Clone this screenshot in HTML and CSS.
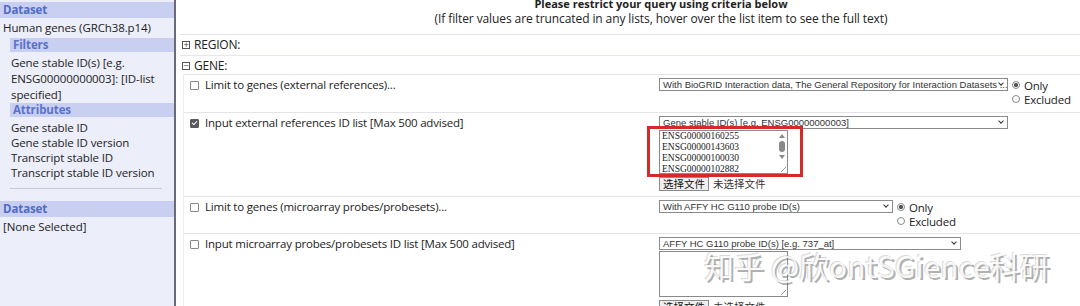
FILE: index.html
```html
<!DOCTYPE html>
<html lang="en">
<head>
  <meta charset="UTF-8" />
  <title>BioMart filters</title>
  <link rel="stylesheet" href="styles.css">
</head>
<body>
  <div class="page">
    <aside class="sidebar">
      <div class="side-head">Dataset</div>
      <div class="side-item">Human genes (GRCh38.p14)</div>
      <div class="side-sub">Filters</div>
      <div class="side-item indent">Gene stable ID(s) [e.g. ENSG00000000003]: [ID-list specified]</div>
      <div class="side-sub tight">Attributes</div>
      <div class="side-list">
        <div>Gene stable ID</div>
        <div>Gene stable ID version</div>
        <div>Transcript stable ID</div>
        <div>Transcript stable ID version</div>
      </div>
      <hr class="side-rule">
      <div class="side-head">Dataset</div>
      <div class="side-item">[None Selected]</div>
    </aside>

    <main class="content">
      <div class="intro">
        <h3>Please restrict your query using criteria below</h3>
        <p>(If filter values are truncated in any lists, hover over the list item to see the full text)</p>
      </div>

      <div class="section">
        <div class="section-title"><span class="toggle">+</span>REGION:</div>
      </div>

      <div class="section">
        <div class="section-title short"><span class="toggle">&minus;</span>GENE:</div>
        <div class="filters">

          <div class="row">
            <div class="label"><span class="cb"></span>Limit to genes (external references)...</div>
            <div class="control inline">
              <div class="select wide">With BioGRID Interaction data, The General Repository for Interaction Datasets ...</div>
              <div class="radios">
                <div class="radio on">Only</div>
                <div class="radio">Excluded</div>
              </div>
            </div>
          </div>

          <div class="row">
            <div class="label"><span class="cb checked"></span>Input external references ID list [Max 500 advised]</div>
            <div class="control">
              <div class="select wide">Gene stable ID(s) [e.g. ENSG00000000003]</div>
              <div class="ids marked">
                <div class="textarea">
                  <div class="lines">ENSG00000160255<br>ENSG00000143603<br>ENSG00000100030<br>ENSG00000102882</div>
                  <div class="scroll"><span class="up"></span><span class="thumb"></span><span class="down"></span></div>
                </div>
              </div>
              <div class="file"><span class="file-btn">选择文件</span>未选择文件</div>
            </div>
          </div>

          <div class="row">
            <div class="label"><span class="cb"></span>Limit to genes (microarray probes/probesets)...</div>
            <div class="control inline">
              <div class="select mid">With AFFY HC G110 probe ID(s)</div>
              <div class="radios">
                <div class="radio on">Only</div>
                <div class="radio">Excluded</div>
              </div>
            </div>
          </div>

          <div class="row">
            <div class="label"><span class="cb"></span>Input microarray probes/probesets ID list [Max 500 advised]</div>
            <div class="control">
              <div class="select long">AFFY HC G110 probe ID(s) [e.g. 737_at]</div>
              <div class="ids">
                <div class="textarea empty"></div>
              </div>
              <div class="file"><span class="file-btn">选择文件</span>未选择文件</div>
            </div>
          </div>

        </div>
      </div>

      <div class="watermark">知乎 @欣ontSGience科研</div>
    </main>
  </div>
</body>
</html>
```

FILE: styles.css
```css
body {
  margin: 0;
  padding: 0;
  background-color: white;
  font-family: "Open Sans", "Noto Sans", sans-serif;
  color: #222;
  overflow: hidden;
}
.page {
  display: flex;
  height: 306px;
  overflow: hidden;
}

/* left summary panel */
.sidebar {
  width: 174px;
  flex: none;
  background-color: #eceefa;
  border-right: 2px solid #6a6a78;
  font-size: 11.5px;
  letter-spacing: -0.1px;
  line-height: 15px;
  padding-top: 2px;
}
.side-head {
  background-color: #c9cff1;
  color: #4f6cc4;
  font-weight: bold;
  padding: 0 3px;
  height: 16px;
  line-height: 16px;
}
.side-sub {
  background-color: #c9cff1;
  color: #5a72cc;
  font-weight: bold;
  margin-left: 10px;
  margin-top: 2px;
  padding: 0 3px;
  height: 14px;
  line-height: 14px;
}
.side-sub.tight { margin-top: 0; }
.side-item {
  padding: 2px 3px 1px;
}
.side-item.indent { padding: 3px 4px 0 11px; line-height: 16px; }
.side-list { padding: 3px 0 0 11px; }
.side-rule {
  border: none;
  border-top: 1px solid #c8c8d4;
  margin: 8px 12px 12px 10px;
}

/* main form */
.content {
  flex: 1;
  position: relative;
  padding-left: 4px;
  font-size: 11.5px;
  letter-spacing: -0.2px;
}
.intro {
  display: flex;
  flex-direction: column;
  align-items: center;
  padding-left: 62px;
  height: 34px;
  border-bottom: 1px solid #e3e3e8;
}
.intro h3 {
  margin: -3px 0 0;
  font-size: 11px;
  line-height: 14px;
  letter-spacing: 0;
}
.intro p {
  margin: 0;
  font-size: 12px;
  line-height: 16px;
  letter-spacing: -0.1px;
}

.section {
  border-bottom: 1px solid #e6e6ec;
}
.section-title {
  height: 20px;
  line-height: 20px;
  display: flex;
  align-items: center;
  padding-left: 2px;
  font-size: 12px;
}
.section-title.short { height: 16px; padding-top: 2px; }
.toggle {
  display: inline-block;
  width: 6px;
  height: 6px;
  border: 1px solid #555;
  font-size: 7px;
  line-height: 6px;
  text-align: center;
  margin-right: 4px;
  color: #333;
  font-family: "DejaVu Sans", sans-serif;
}

.filters {
  margin-left: 3px;
  border-left: 1px solid #ececf0;
}
.row {
  display: grid;
  grid-template-columns: 475px 1fr;
  border-top: 1px solid #e3e3e8;
  padding: 3px 0 5px;
}
.row:first-child { padding-bottom: 6px; }
.label {
  display: flex;
  align-items: center;
  height: 14px;
  line-height: 14px;
  padding-left: 6px;
}
.cb {
  width: 7px;
  height: 7px;
  border: 1px solid #888;
  border-radius: 1px;
  margin-right: 6px;
  background-color: white;
}
.cb.checked {
  background-color: #5a5a5a;
  border-color: #5a5a5a;
  position: relative;
}
.cb.checked::after {
  content: "";
  position: absolute;
  left: 2px;
  top: 0;
  width: 2px;
  height: 4px;
  border: solid white;
  border-width: 0 1px 1px 0;
  transform: rotate(45deg);
}

.control { display: flex; flex-direction: column; align-items: flex-start; }
.control.inline { flex-direction: row; }

.select {
  box-sizing: border-box;
  height: 13px;
  border: 1px solid #8a8a8a;
  font-family: "Liberation Sans", Arial, sans-serif;
  font-size: 9.5px;
  letter-spacing: 0;
  line-height: 11px;
  padding: 0 10px 0 3px;
  position: relative;
  white-space: nowrap;
  overflow: hidden;
  color: #333;
}
.select::after {
  content: "";
  position: absolute;
  right: 4px;
  top: 2px;
  width: 3px;
  height: 3px;
  border: solid #333;
  border-width: 0 1px 1px 0;
  transform: rotate(45deg);
}
.select.wide { width: 349px; }
.select.mid { width: 234px; }
.select.long { width: 302px; }

.radios { margin-left: 4px; }
.radio {
  display: flex;
  align-items: center;
  height: 14px;
  font-size: 11.5px;
}
.radio::before {
  content: "";
  width: 6px;
  height: 6px;
  border: 1px solid #888;
  border-radius: 50%;
  margin-right: 4px;
  box-sizing: content-box;
}
.radio.on::before {
  background: radial-gradient(circle, #555 45%, white 55%);
}

.ids {
  position: relative;
  margin-top: 1px;
}
.ids.marked::before {
  content: "";
  position: absolute;
  left: -12px;
  top: -4px;
  width: 150px;
  height: 45px;
  border: 3px solid #d42a2a;
}
.textarea {
  box-sizing: border-box;
  width: 129px;
  height: 44px;
  border: 1px solid #8a8a8a;
  display: flex;
  position: relative;
  background-color: white;
}
.textarea::after {
  content: "";
  position: absolute;
  right: 1px;
  bottom: 1px;
  width: 5px;
  height: 5px;
  background: linear-gradient(135deg, transparent 45%, #999 46%, #999 54%, transparent 55%, transparent 70%, #999 71%, #999 79%, transparent 80%);
}
.textarea.empty { height: 46px; }
.lines {
  flex: 1;
  font-family: "Liberation Serif", "Times New Roman", serif;
  font-size: 9.5px;
  letter-spacing: 0;
  line-height: 11px;
  padding: 0 2px;
  color: #222;
}
.scroll {
  width: 10px;
  display: flex;
  flex-direction: column;
  align-items: center;
  padding-top: 3px;
}
.up, .down {
  width: 0;
  height: 0;
  border-left: 3px solid transparent;
  border-right: 3px solid transparent;
}
.up { border-bottom: 4px solid #8a8a8a; }
.down { border-top: 4px solid #8a8a8a; }
.thumb {
  width: 6px;
  height: 11px;
  border-radius: 3px;
  background-color: #8a8a8a;
  margin: 3px 0;
}

.file {
  margin-top: 3px;
  font-family: "Noto Sans CJK SC", sans-serif;
  font-size: 10.5px;
  letter-spacing: 0;
  line-height: 12px;
  color: #333;
  display: flex;
  align-items: center;
}
.file-btn {
  border: 1px solid #8a8a8a;
  background-color: #efefef;
  padding: 0 3px;
  margin-right: 4px;
  color: #111;
}

.watermark {
  position: absolute;
  left: 528px;
  top: 245px;
  font-family: "Noto Sans CJK SC", "Open Sans", sans-serif;
  font-size: 30px;
  line-height: 40px;
  letter-spacing: 0;
  color: rgba(255, 255, 255, 0.85);
  text-shadow: 2px 2px 0 rgba(110, 110, 110, 0.55), -1px -1px 0 rgba(150, 150, 150, 0.35);
  white-space: nowrap;
}
```
